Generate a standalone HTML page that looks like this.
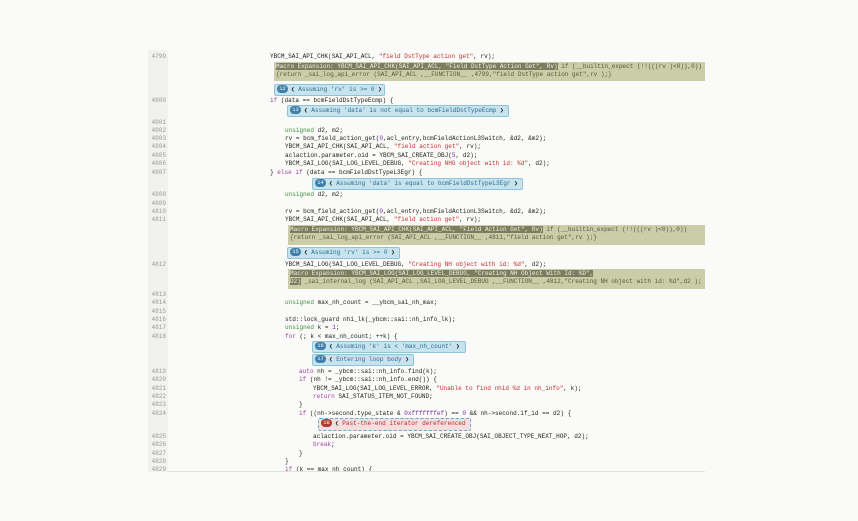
<!DOCTYPE html>
<html><head><meta charset="utf-8"><style>
body{margin:0;width:858px;height:521px;background:#fafaf8;position:relative;overflow:hidden;font-family:"Liberation Mono","DejaVu Sans Mono",monospace;font-size:6.05px;color:#222;}
#w{position:absolute;left:0;top:1.5px;width:858px;height:519px;}
.gut{position:absolute;left:148px;top:48px;width:20px;height:422px;background:#f1f1ef;}
.bot{position:absolute;left:168px;top:469.5px;width:537px;height:1px;background:#e2e2e0;}
.ln{position:absolute;left:148px;width:18px;text-align:right;color:#999;line-height:8px;}
.c{position:absolute;white-space:pre;line-height:8px;}
.k{color:#a040a0}.t{color:#3f8f3f}.s{color:#c03030}.n{color:#7a2aa8}
.mac{position:absolute;background:#cbcda9;color:#555a3a;white-space:pre;line-height:8.5px;padding:1px 2px;box-sizing:border-box;font-size:6.02px;overflow:hidden;}
.mh{background:#7b7e5e;color:#f0f0e0;}
.b{position:absolute;background:#c6e3ee;border:1px solid #8fc4d8;border-radius:2px;color:#2b6f90;white-space:pre;line-height:10px;box-sizing:border-box;padding-left:2px;}
.num{display:inline-block;background:#3d7fa8;color:#fff;border-radius:5px;width:11px;height:8px;line-height:8px;text-align:center;margin-right:3px;vertical-align:middle;font-size:5.5px;}
.b .ar{color:#111;font-weight:bold;}
.r{background:#f5dede;border:1px dashed #6aa6d6;color:#b03030;}
.r .num{background:#b03a3a;}
</style></head><body><div id="w">
<div class="gut"></div><div class="bot"></div>

<div class="ln" style="top:51px">4799</div><div class="c" style="left:270px;top:51px">YBCM_SAI_API_CHK(SAI_API_ACL, <span class="s">"field DstType action get"</span>, rv);</div>
<div class="mac" style="left:274px;top:60px;width:431px;height:19px"><span class="mh">Macro Expansion: YBCM_SAI_API_CHK(SAI_API_ACL, "Field DstType Action Get", Rv)</span> if (__builtin_expect (!!(((rv )&lt;0)),0))
{return _sai_log_api_error (SAI_API_ACL ,__FUNCTION__ ,4799,"field DstType action get",rv );}</div>
<div class="b" style="left:274px;top:82px;width:111px;height:12px"><span class="num">12</span><span class="ar">❮</span> Assuming 'rv' is &gt;= 0 <span class="ar">❯</span></div>
<div class="ln" style="top:95px">4800</div><div class="c" style="left:270px;top:95px"><span class="k">if</span> (data == bcmFieldDstTypeEcmp) {</div>
<div class="b" style="left:287px;top:103px;width:222px;height:12px"><span class="num">13</span><span class="ar">❮</span> Assuming 'data' is not equal to bcmFieldDstTypeEcmp <span class="ar">❯</span></div>
<div class="ln" style="top:117px">4801</div>
<div class="ln" style="top:125px">4802</div><div class="c" style="left:285px;top:125px"><span class="t">unsigned</span> d2, m2;</div>
<div class="ln" style="top:133px">4803</div><div class="c" style="left:285px;top:133px">rv = bcm_field_action_get(<span class="n">0</span>,acl_entry,bcmFieldActionL3Switch, &amp;d2, &amp;m2);</div>
<div class="ln" style="top:141px">4804</div><div class="c" style="left:285px;top:141px">YBCM_SAI_API_CHK(SAI_API_ACL, <span class="s">"field action get"</span>, rv);</div>
<div class="ln" style="top:150px">4805</div><div class="c" style="left:285px;top:150px">aclaction.parameter.oid = YBCM_SAI_CREATE_OBJ(<span class="n">5</span>, d2);</div>
<div class="ln" style="top:158px">4806</div><div class="c" style="left:285px;top:158px">YBCM_SAI_LOG(SAI_LOG_LEVEL_DEBUG, <span class="s">"Creating NHG object with id: %d"</span>, d2);</div>
<div class="ln" style="top:167px">4807</div><div class="c" style="left:270px;top:167px">} <span class="k">else if</span> (data == bcmFieldDstTypeL3Egr) {</div>
<div class="b" style="left:312px;top:176px;width:211px;height:12px"><span class="num">14</span><span class="ar">❮</span> Assuming 'data' is equal to bcmFieldDstTypeL3Egr <span class="ar">❯</span></div>
<div class="ln" style="top:189px">4808</div><div class="c" style="left:285px;top:189px"><span class="t">unsigned</span> d2, m2;</div>
<div class="ln" style="top:198px">4809</div>
<div class="ln" style="top:206px">4810</div><div class="c" style="left:285px;top:206px">rv = bcm_field_action_get(<span class="n">0</span>,acl_entry,bcmFieldActionL3Switch, &amp;d2, &amp;m2);</div>
<div class="ln" style="top:214px">4811</div><div class="c" style="left:285px;top:214px">YBCM_SAI_API_CHK(SAI_API_ACL, <span class="s">"field action get"</span>, rv);</div>
<div class="mac" style="left:288px;top:223px;width:417px;height:20px"><span class="mh">Macro Expansion: YBCM_SAI_API_CHK(SAI_API_ACL, "Field Action Get", Rv)</span> if (__builtin_expect (!!(((rv )&lt;0)),0))
{return _sai_log_api_error (SAI_API_ACL ,__FUNCTION__ ,4811,"field action get",rv );}</div>
<div class="b" style="left:287px;top:245px;width:113px;height:12px"><span class="num">15</span><span class="ar">❮</span> Assuming 'rv' is &gt;= 0 <span class="ar">❯</span></div>
<div class="ln" style="top:259px">4812</div><div class="c" style="left:285px;top:259px">YBCM_SAI_LOG(SAI_LOG_LEVEL_DEBUG, <span class="s">"Creating NH object with id: %d"</span>, d2);</div>
<div class="mac" style="left:288px;top:267px;width:417px;height:20px"><span class="mh">Macro Expansion: YBCM_SAI_LOG(SAI_LOG_LEVEL_DEBUG, "Creating NH Object With Id: %D",</span>
<span class="mh">D2)</span> _sai_internal_log (SAI_API_ACL ,SAI_LOG_LEVEL_DEBUG ,__FUNCTION__ ,4812,"Creating NH object with id: %d",d2 );</div>
<div class="ln" style="top:289px">4813</div>
<div class="ln" style="top:297px">4814</div><div class="c" style="left:285px;top:297px"><span class="t">unsigned</span> max_nh_count = __ybcm_sai_nh_max;</div>
<div class="ln" style="top:306px">4815</div>
<div class="ln" style="top:314px">4816</div><div class="c" style="left:285px;top:314px">std::lock_guard nhi_lk(_ybcm::sai::nh_info_lk);</div>
<div class="ln" style="top:322px">4817</div><div class="c" style="left:285px;top:322px"><span class="t">unsigned</span> k = <span class="n">1</span>;</div>
<div class="ln" style="top:331px">4818</div><div class="c" style="left:285px;top:331px"><span class="k">for</span> (; k &lt; max_nh_count; ++k) {</div>
<div class="b" style="left:312px;top:339px;width:154px;height:12px"><span class="num">16</span><span class="ar">❮</span> Assuming 'k' is &lt; 'max_nh_count' <span class="ar">❯</span></div>
<div class="b" style="left:312px;top:352px;width:102px;height:12px"><span class="num">17</span><span class="ar">❮</span> Entering loop body <span class="ar">❯</span></div>
<div class="ln" style="top:366px">4819</div><div class="c" style="left:299px;top:366px"><span class="k">auto</span> nh = _ybcm::sai::nh_info.find(k);</div>
<div class="ln" style="top:374px">4820</div><div class="c" style="left:299px;top:374px"><span class="k">if</span> (nh != _ybcm::sai::nh_info.end()) {</div>
<div class="ln" style="top:383px">4821</div><div class="c" style="left:313px;top:383px">YBCM_SAI_LOG(SAI_LOG_LEVEL_ERROR, <span class="s">"Unable to find nhid %d in nh_info"</span>, k);</div>
<div class="ln" style="top:391px">4822</div><div class="c" style="left:313px;top:391px"><span class="k">return</span> SAI_STATUS_ITEM_NOT_FOUND;</div>
<div class="ln" style="top:399px">4823</div><div class="c" style="left:299px;top:399px">}</div>
<div class="ln" style="top:408px">4824</div><div class="c" style="left:299px;top:408px"><span class="k">if</span> ((nh-&gt;second.type_state &amp; <span class="n">0xfffffffef</span>) == <span class="n">0</span> &amp;&amp; nh-&gt;second.if_id == d2) {</div>
<div class="b r" style="left:318px;top:416px;width:153px;height:13px"><span class="num">18</span><span class="ar">❮</span> Past-the-end iterator dereferenced</div>
<div class="ln" style="top:431px">4825</div><div class="c" style="left:313px;top:431px">aclaction.parameter.oid = YBCM_SAI_CREATE_OBJ(SAI_OBJECT_TYPE_NEXT_HOP, d2);</div>
<div class="ln" style="top:439px">4826</div><div class="c" style="left:313px;top:439px"><span class="k">break</span>;</div>
<div class="ln" style="top:448px">4827</div><div class="c" style="left:299px;top:448px">}</div>
<div class="ln" style="top:456px">4828</div><div class="c" style="left:285px;top:456px">}</div>
<div style="position:absolute;left:148px;top:463px;width:560px;height:6.5px;overflow:hidden">
<div class="ln" style="left:0;top:1px">4829</div><div class="c" style="left:137px;top:1px"><span class="k">if</span> (k == max_nh_count) {</div></div>
</div></body></html>
